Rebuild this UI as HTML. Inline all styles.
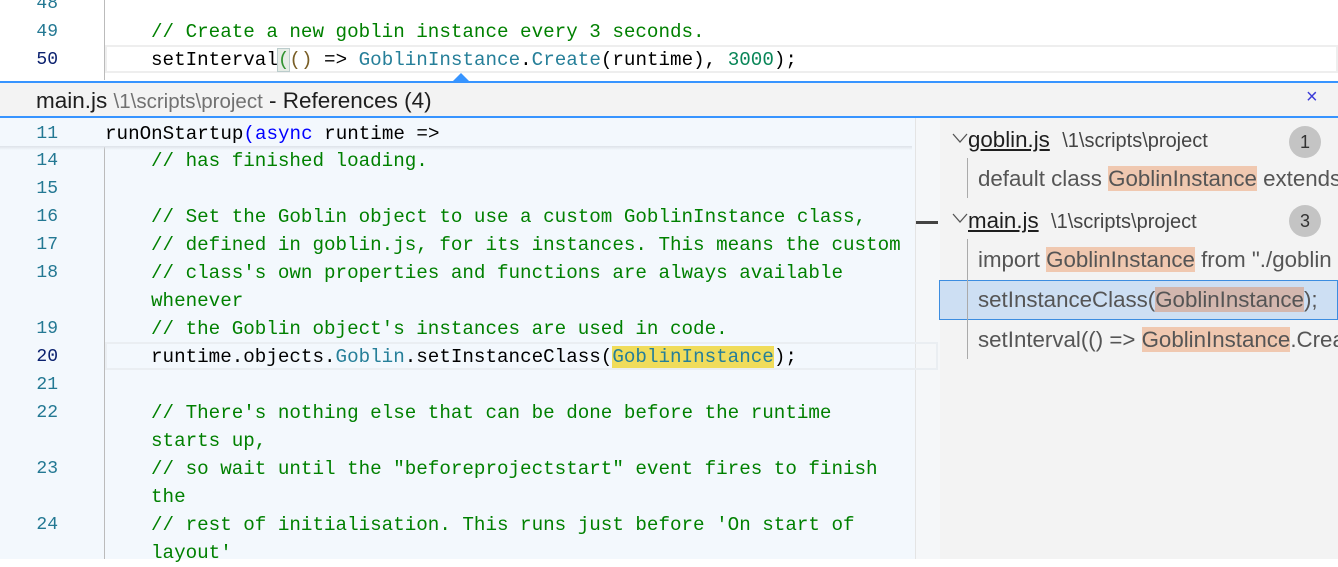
<!DOCTYPE html>
<html><head><meta charset="utf-8"><style>
*{margin:0;padding:0;box-sizing:border-box}
body{width:1338px;height:559px;overflow:hidden;background:#fff;position:relative;font-family:"Liberation Mono",monospace;font-size:19.23px}
.l{position:absolute;height:28px;line-height:28px;white-space:pre;color:#000}
.n{position:absolute;height:28px;line-height:28px;width:58px;text-align:right;color:#237893;font-size:18px}
.c{color:#008000}.t{color:#267f99}.k{color:#0000ff}.num{color:#098658}.f{color:#795e26}
.s{font-family:"Liberation Sans",sans-serif}
.hl{background:#f0c8b0}
.r{position:absolute;left:978px;font-size:22.3px;line-height:30px;white-space:pre;color:#555}
.h{position:absolute;left:952px;font-size:22.3px;line-height:28px;white-space:pre;color:#1e1e1e}
</style></head><body>
<div style="position:absolute;left:104px;top:0;width:1px;height:80px;background:#bbb"></div>
<div style="position:absolute;left:105px;top:45px;width:1233px;height:28px;border:2px solid #eee"></div>
<div class="n" style="top:-10px">48</div>
<div class="n" style="top:18px">49</div>
<div class="n" style="top:46px;color:#0b216f">50</div>
<div class="l c" style="left:151px;top:18px">// Create a new goblin instance every 3 seconds.</div>
<div class="l" style="left:151px;top:46px">setInterval<span style="color:#319331;background:#e6ece6;outline:1px solid #bcc">(</span><span class="f">()</span> =&gt; <span class="t">GoblinInstance</span>.<span class="t">Create</span>(runtime), <span class="num">3000</span>);</div>
<div style="position:absolute;left:453px;top:73px;width:0;height:0;border-left:8px solid transparent;border-right:8px solid transparent;border-bottom:8px solid #3794ff"></div>
<div style="position:absolute;left:0;top:81px;width:1338px;height:478px;background:#f3f3f3;border-top:2px solid #3794ff"></div>
<div class="s" style="position:absolute;left:36px;top:86px;font-size:22.5px;line-height:30px;white-space:pre;color:#1e1e1e">main.js <span style="color:#717171;font-size:20.5px">\1\scripts\project</span> - References (4)</div>
<div class="s" style="position:absolute;left:1306px;top:86px;color:#3b3bd8;font-size:20px">×</div>
<div style="position:absolute;left:0;top:116px;width:1338px;height:2px;background:#3794ff"></div>
<div style="position:absolute;left:0;top:118px;width:915px;height:441px;background:#f3f8fd"></div>
<div style="position:absolute;left:915px;top:118px;width:25px;height:441px;background:#f5f7f9;border-left:1px solid #e4e4e4"></div>
<div style="position:absolute;left:104px;top:147px;width:1px;height:412px;background:#bbb"></div>
<div style="position:absolute;left:0;top:146px;width:912px;height:4px;background:linear-gradient(#dde2e8,transparent)"></div>
<div style="position:absolute;left:105px;top:342px;width:833px;height:28px;border:2px solid #eaeef2"></div>
<div class="n" style="top:120px">11</div><div class="l" style="left:105px;top:120px">runOnStartup<span class="k">(</span><span class="k">async</span> runtime =&gt;</div>
<div class="n" style="top:147px">14</div><div class="l c" style="left:151px;top:147px">// has finished loading.</div>
<div class="n" style="top:175px">15</div>
<div class="n" style="top:203px">16</div><div class="l c" style="left:151px;top:203px">// Set the Goblin object to use a custom GoblinInstance class,</div>
<div class="n" style="top:231px">17</div><div class="l c" style="left:151px;top:231px">// defined in goblin.js, for its instances. This means the custom</div>
<div class="n" style="top:259px">18</div><div class="l c" style="left:151px;top:259px">// class's own properties and functions are always available</div>
<div class="l c" style="left:151px;top:287px">whenever</div>
<div class="n" style="top:315px">19</div><div class="l c" style="left:151px;top:315px">// the Goblin object's instances are used in code.</div>
<div class="n" style="top:343px;color:#0b216f">20</div><div class="l" style="left:151px;top:343px">runtime.objects.<span class="t">Goblin</span>.setInstanceClass(<span class="t" style="background:#f0dc5a">GoblinInstance</span>);</div>
<div class="n" style="top:371px">21</div>
<div class="n" style="top:399px">22</div><div class="l c" style="left:151px;top:399px">// There's nothing else that can be done before the runtime</div>
<div class="l c" style="left:151px;top:427px">starts up,</div>
<div class="n" style="top:455px">23</div><div class="l c" style="left:151px;top:455px">// so wait until the "beforeprojectstart" event fires to finish</div>
<div class="l c" style="left:151px;top:483px">the</div>
<div class="n" style="top:511px">24</div><div class="l c" style="left:151px;top:511px">// rest of initialisation. This runs just before 'On start of</div>
<div class="l c" style="left:151px;top:539px">layout'</div>
<div style="position:absolute;left:916px;top:221px;width:22px;height:3px;background:#444"></div>
<svg style="position:absolute;left:952px;top:132px" width="16" height="12"><path d="M1 2 L8 10 L15 2" fill="none" stroke="#555" stroke-width="1.3"/></svg>
<svg style="position:absolute;left:952px;top:212px" width="16" height="12"><path d="M1 2 L8 10 L15 2" fill="none" stroke="#555" stroke-width="1.3"/></svg>
<div class="s h" style="left:968px;top:126px"><u>goblin.js</u>  <span style="font-size:20px;color:#444">\1\scripts\project</span></div>
<div class="s" style="position:absolute;left:1289px;top:126px;width:32px;height:32px;border-radius:16px;background:#c4c4c4;text-align:center;line-height:32px;font-size:18px;color:#333">1</div>
<div style="position:absolute;left:967px;top:158px;width:1px;height:40px;background:#aaa"></div>
<div class="s r" style="top:164px">default class <span class="hl">GoblinInstance</span> extends</div>
<div class="s h" style="left:968px;top:207px"><u>main.js</u>  <span style="font-size:20px;color:#444">\1\scripts\project</span></div>
<div class="s" style="position:absolute;left:1289px;top:205px;width:32px;height:32px;border-radius:16px;background:#c4c4c4;text-align:center;line-height:32px;font-size:18px;color:#333">3</div>
<div style="position:absolute;left:939px;top:280px;width:399px;height:40px;background:#cddff3;border:1px solid #3c8de0"></div>
<div style="position:absolute;left:967px;top:239px;width:1px;height:120px;background:#aaa"></div>
<div class="s r" style="top:245px">import <span class="hl">GoblinInstance</span> from "./goblin</div>
<div class="s r" style="top:285px">setInstanceClass(<span style="background:#d3b7ae">GoblinInstance</span>);</div>
<div class="s r" style="top:325px">setInterval(() =&gt; <span class="hl">GoblinInstance</span>.Create</div>
</body></html>
